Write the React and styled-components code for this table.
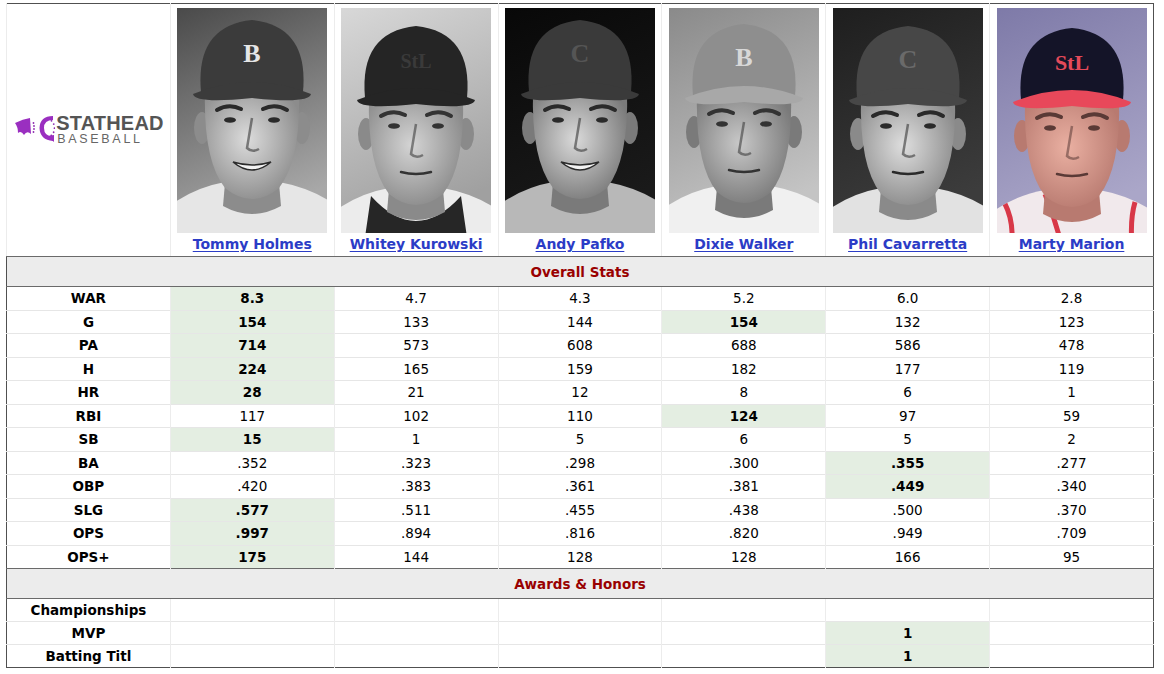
import React from "react";
import styled, { createGlobalStyle, css } from "styled-components";

const GlobalStyle = createGlobalStyle`
  html, body { margin: 0; padding: 0; background: #fff; }
  body { font-family: "DejaVu Sans", Verdana, sans-serif; color: #000; }
`;

const Page = styled.div`
  padding: 3px 0 0 6px;
`;

const Table = styled.table`
  width: 1148px;
  table-layout: fixed;
  border-collapse: collapse;
  border: 1px solid #505050;
  font-size: 13.5px;
`;

const HeadCell = styled.th`
  padding: 4px 0 4px;
  vertical-align: ${(p) => (p.$logo ? "middle" : "top")};
  text-align: center;
  border-left: 1px solid #ececec;
  border-bottom: 1px solid #6a6a6a;
  font-weight: normal;
`;

const PhotoFrame = styled.div`
  width: 150px;
  height: 225px;
  margin: 0 auto;
  overflow: hidden;
  svg { display: block; }
`;

const NameLink = styled.a`
  display: block;
  margin-top: 3px;
  line-height: 16px;
  font-weight: bold;
  font-size: 14px;
  color: #2b3cc6;
  text-decoration: underline;
  text-underline-offset: 2px;
`;

const SectionCell = styled.td`
  height: 29px;
  padding: 0;
  background: #ececec;
  color: #990000;
  font-weight: bold;
  text-align: center;
  border-top: 1px solid #6a6a6a;
  border-bottom: 1px solid #6a6a6a;
`;

const Row = styled.tr`
  border-bottom: 1px solid #e6e6e6;
  &:last-child { border-bottom: none; }
  td { height: ${(p) => p.$h || 22.5}px; }
`;

const LabelCell = styled.td`
  padding: 0;
  line-height: 16px;
  text-align: center;
  font-weight: bold;
`;

const ValueCell = styled.td`
  padding: 0;
  line-height: 16px;
  text-align: center;
  border-left: 1px solid #ececec;
  ${(p) =>
    p.$hi &&
    css`
      background: #e4eee2;
      font-weight: bold;
    `}
`;

const Logo = styled.div`
  display: inline-flex;
  align-items: center;
  gap: 1px;
`;

const LogoText = styled.div`
  display: flex;
  flex-direction: column;
  align-items: flex-start;
  font-family: "Liberation Sans", Arial, sans-serif;
  color: #555;
`;

const LogoMain = styled.span`
  font-size: 20px;
  font-weight: bold;
  line-height: 19px;
  letter-spacing: 0.2px;
`;

const LogoSub = styled.span`
  font-size: 12.5px;
  line-height: 12px;
  letter-spacing: 2.7px;
  color: #666;
  margin-left: 1px;
`;

function StatheadMark() {
  const dots = [];
  for (let i = 0; i < 7; i++) {
    const a = (-80 + i * 27) * (Math.PI / 180);
    dots.push(
      <circle key={i} cx={33 + Math.cos(a) * 7.5} cy={13 + Math.sin(a) * 9} r="0.9" fill="#8e2ab0" />
    );
  }
  return (
    <svg width="42" height="28" viewBox="0 0 40 28">
      <path d="M1 8 Q9 4 16 3 L17 19 Q13 15 10 20 Q7 15 4 18 Q4 12 1 8 Z" fill="#9a2fc0" />
      <circle cx="19.5" cy="8" r="0.9" fill="#8e2ab0" />
      <circle cx="20" cy="11" r="0.9" fill="#8e2ab0" />
      <circle cx="20" cy="14" r="0.9" fill="#8e2ab0" />
      <circle cx="19.5" cy="17" r="0.9" fill="#8e2ab0" />
      {dots}
      <path d="M39 1 Q26 1 25.5 13 Q26 25 39 26 L39 22 Q30 21 30 13 Q30 5 39 5 Z" fill="#9a2fc0" />
      <path d="M33 21 L40 20 L40 27 Z" fill="#9a2fc0" />
    </svg>
  );
}

function Portrait({ p, id }) {
  const gid = `g${id}`;
  const fid = `f${id}`;
  return (
    <svg width="150" height="225" viewBox="0 0 150 225">
      <defs>
        <linearGradient id={gid} x1="0" y1="0" x2="0.3" y2="1">
          <stop offset="0" stopColor={p.bg} />
          <stop offset="1" stopColor={p.bg2} />
        </linearGradient>
        <radialGradient id={fid} cx="0.45" cy="0.45" r="0.6">
          <stop offset="0" stopColor={p.skin} />
          <stop offset="1" stopColor={p.shade} />
        </radialGradient>
      </defs>
      <rect width="150" height="225" fill={`url(#${gid})`} />
      <g transform={`translate(${p.dx || 0} ${p.dy || 0})`}>
        <path d="M-10 235 L-10 198 Q15 178 48 172 L102 172 Q135 178 160 196 L160 235 Z" fill={p.shirt} />
        {p.stripes && (
          <g stroke={p.stripes} strokeWidth="5" fill="none">
            <path d="M8 186 Q18 205 14 235" />
            <path d="M138 184 Q132 205 136 235" />
            <path d="M48 176 Q60 205 66 235" />
          </g>
        )}
        {p.collar && <path d="M30 180 Q75 230 120 180 L128 235 L22 235 Z" fill={p.collar} />}
        <path d="M50 150 L100 150 L104 196 Q75 212 46 196 Z" fill={p.shade} />
        <ellipse cx="25" cy="118" rx="8" ry="16" fill={p.shade} />
        <ellipse cx="125" cy="118" rx="8" ry="16" fill={p.shade} />
        <path d="M28 80 Q26 150 48 178 Q75 200 102 178 Q124 150 122 80 Z" fill={`url(#${fid})`} />
        <path d="M40 100 Q52 93 64 99" stroke={p.feature} strokeWidth="4" fill="none" strokeLinecap="round" />
        <path d="M86 99 Q98 93 110 100" stroke={p.feature} strokeWidth="4" fill="none" strokeLinecap="round" />
        <ellipse cx="53" cy="110" rx="6" ry="2.8" fill={p.feature} />
        <ellipse cx="97" cy="110" rx="6" ry="2.8" fill={p.feature} />
        <path d="M75 108 L70 138 Q75 143 82 139" stroke={p.feature} strokeOpacity="0.55" strokeWidth="2.5" fill="none" />
        {p.smile ? (
          <path d="M56 152 Q75 168 94 152 Q75 158 56 152 Z" fill="#f2f2f2" stroke={p.feature} strokeWidth="1.5" />
        ) : (
          <path d="M60 156 Q75 160 90 156" stroke={p.feature} strokeWidth="2.5" fill="none" strokeLinecap="round" />
        )}
        <path d="M24 82 Q18 16 75 10 Q132 16 126 82 Z" fill={p.cap} />
        <path d="M16 84 Q75 60 134 84 Q132 94 75 88 Q18 94 16 84 Z" fill={p.brim || p.cap} />
        <text
          x="75"
          y="52"
          textAnchor="middle"
          fontFamily="Liberation Serif, serif"
          fontWeight="bold"
          fontSize={p.logoSize || 26}
          fill={p.logoColor}
        >
          {p.logo}
        </text>
      </g>
    </svg>
  );
}

const players = [
  {
    name: "Tommy Holmes",
    stats: ["8.3", "154", "714", "224", "28", "117", "15", ".352", ".420", ".577", ".997", "175"],
    hi: [0, 1, 2, 3, 4, 6, 9, 10, 11],
    look: { bg: "#4a4a4a", bg2: "#a8a8a8", cap: "#3b3b3b", logo: "B", logoColor: "#e6e6e6", skin: "#dcdcdc", shade: "#8c8c8c", shirt: "#e6e6e6", feature: "#2a2a2a", smile: true, dy: 2 },
  },
  {
    name: "Whitey Kurowski",
    stats: ["4.7", "133", "573", "165", "21", "102", "1", ".323", ".383", ".511", ".894", "144"],
    hi: [],
    look: { bg: "#d8d8d8", bg2: "#a0a0a0", cap: "#252525", logo: "StL", logoColor: "#3a3a3a", logoSize: 20, skin: "#d4d4d4", shade: "#8a8a8a", shirt: "#ececec", collar: "#262626", feature: "#333", dy: 8 },
  },
  {
    name: "Andy Pafko",
    stats: ["4.3", "144", "608", "159", "12", "110", "5", ".298", ".361", ".455", ".816", "128"],
    hi: [],
    look: { bg: "#080808", bg2: "#1a1a1a", cap: "#3a3a3a", logo: "C", logoColor: "#555", skin: "#dadada", shade: "#7a7a7a", shirt: "#b8b8b8", feature: "#2a2a2a", smile: true, dy: 2 },
  },
  {
    name: "Dixie Walker",
    stats: ["5.2", "154", "688", "182", "8", "124", "6", ".300", ".381", ".438", ".820", "128"],
    hi: [1, 5],
    look: { bg: "#8a8a8a", bg2: "#c4c4c4", cap: "#8e8e8e", brim: "#a8a8a8", logo: "B", logoColor: "#d8d8d8", skin: "#c8c8c8", shade: "#7a7a7a", shirt: "#f0f0f0", feature: "#333", dy: 6 },
  },
  {
    name: "Phil Cavarretta",
    stats: ["6.0", "132", "586", "177", "6", "97", "5", ".355", ".449", ".500", ".949", "166"],
    hi: [7, 8],
    look: { bg: "#1e1e1e", bg2: "#3c3c3c", cap: "#474747", logo: "C", logoColor: "#6a6a6a", skin: "#dedede", shade: "#8a8a8a", shirt: "#e2e2e2", feature: "#2a2a2a", dy: 8 },
  },
  {
    name: "Marty Marion",
    stats: ["2.8", "123", "478", "119", "1", "59", "2", ".277", ".340", ".370", ".709", "95"],
    hi: [],
    look: { bg: "#7e7aa8", bg2: "#aaa6c8", cap: "#141428", brim: "#e8485a", logo: "StL", logoColor: "#e44a5a", logoSize: 22, skin: "#eab0a2", shade: "#b87a70", shirt: "#f1e9ec", stripes: "#d83848", feature: "#5a3a36", dy: 10 },
  },
];

const statLabels = ["WAR", "G", "PA", "H", "HR", "RBI", "SB", "BA", "OBP", "SLG", "OPS", "OPS+"];

const awards = [
  { label: "Championships", values: ["", "", "", "", "", ""], hi: [] },
  { label: "MVP", values: ["", "", "", "", "1", ""], hi: [4] },
  { label: "Batting Titl", values: ["", "", "", "", "1", ""], hi: [4] },
];

export default function App() {
  return (
    <>
      <GlobalStyle />
      <Page>
        <Table>
          <thead>
            <tr>
              <HeadCell $logo>
                <Logo>
                  <StatheadMark />
                  <LogoText>
                    <LogoMain>STATHEAD</LogoMain>
                    <LogoSub>BASEBALL</LogoSub>
                  </LogoText>
                </Logo>
              </HeadCell>
              {players.map((pl, i) => (
                <HeadCell key={pl.name}>
                  <PhotoFrame>
                    <Portrait p={pl.look} id={i} />
                  </PhotoFrame>
                  <NameLink href="#">{pl.name}</NameLink>
                </HeadCell>
              ))}
            </tr>
          </thead>
          <tbody>
            <tr>
              <SectionCell colSpan={7}>Overall Stats</SectionCell>
            </tr>
          </tbody>
          <tbody>
            {statLabels.map((label, r) => (
              <Row key={label}>
                <LabelCell>{label}</LabelCell>
                {players.map((pl) => (
                  <ValueCell key={pl.name} $hi={pl.hi.includes(r)}>
                    {pl.stats[r]}
                  </ValueCell>
                ))}
              </Row>
            ))}
          </tbody>
          <tbody>
            <tr>
              <SectionCell colSpan={7}>Awards &amp; Honors</SectionCell>
            </tr>
          </tbody>
          <tbody>
            {awards.map((a) => (
              <Row key={a.label} $h={22}>
                <LabelCell>{a.label}</LabelCell>
                {a.values.map((v, c) => (
                  <ValueCell key={c} $hi={a.hi.includes(c)}>
                    {v}
                  </ValueCell>
                ))}
              </Row>
            ))}
          </tbody>
        </Table>
      </Page>
    </>
  );
}
